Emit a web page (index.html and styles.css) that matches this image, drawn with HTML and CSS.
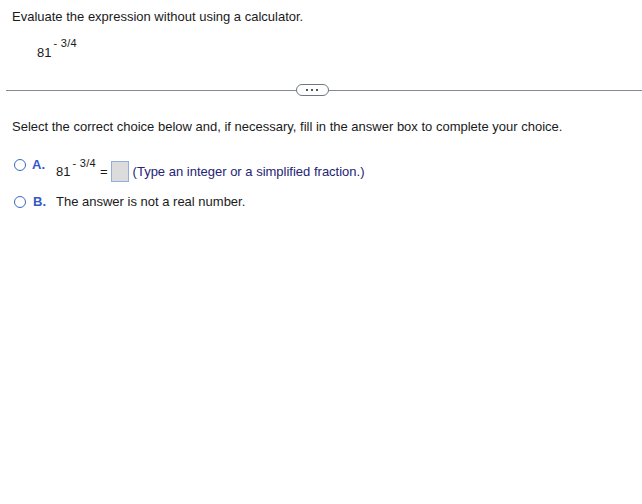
FILE: index.html
```html
<!DOCTYPE html>
<html>
<head>
<meta charset="utf-8">
<link rel="stylesheet" href="styles.css">
</head>
<body>
<div class="page">
  <p class="instr">Evaluate the expression without using a calculator.</p>
  <div class="expr"><span class="base">81</span><span class="sup">- 3/4</span></div>
  <div class="divider"><span class="pill"><span class="dot"></span><span class="dot"></span><span class="dot"></span></span></div>
  <p class="select">Select the correct choice below and, if necessary, fill in the answer box to complete your choice.</p>
  <div class="choice choice-a">
    <span class="radio"></span>
    <span class="label">A.</span>
    <span class="math"><span class="base">81</span><span class="sup">- 3/4</span></span>
    <span class="eq">=</span>
    <span class="box"></span>
    <span class="hint">(Type an integer or a simplified fraction.)</span>
  </div>
  <div class="choice choice-b">
    <span class="radio"></span>
    <span class="label">B.</span>
    <span class="text">The answer is not a real number.</span>
  </div>
</div>
</body>
</html>
```
FILE: styles.css
```css
html, body {
  margin: 0;
  padding: 0;
  background: #ffffff;
}
body {
  font-family: "Liberation Sans", Arial, sans-serif;
  font-size: 13px;
  color: #1a1a1a;
  width: 642px;
  height: 504px;
  overflow: hidden;
}
.page {
  padding: 9px 0 0 0;
}
p { margin: 0; }
.instr {
  padding-left: 12px;
  line-height: 16px;
}
.expr {
  display: flex;
  align-items: flex-start;
  padding-left: 37px;
  margin-top: 12px;
  height: 24px;
}
.base {
  display: inline-block;
  padding-top: 8px;
  line-height: 15px;
}
.sup {
  display: inline-block;
  font-size: 11px;
  line-height: 12px;
  margin-left: 2px;
  letter-spacing: 0.3px;
}
.divider {
  margin: 23px 0 0 6px;
  padding-right: 24px;
  height: 12px;
  display: flex;
  align-items: center;
  justify-content: center;
  position: relative;
}
.divider::before {
  content: "";
  position: absolute;
  left: 0;
  right: 0;
  top: 6px;
  height: 1px;
  background: #848b96;
}
.pill {
  position: relative;
  z-index: 1;
  width: 31px;
  height: 10px;
  border: 1px solid #6f7785;
  border-radius: 6px;
  background: #fff;
  display: flex;
  align-items: center;
  justify-content: center;
  gap: 3px;
}
.dot {
  width: 2px;
  height: 2px;
  background: #4d5560;
}
.select {
  padding-left: 12px;
  margin-top: 23px;
  line-height: 16px;
}
.choice {
  display: flex;
  align-items: flex-start;
  padding-left: 14px;
}
.choice-a {
  margin-top: 22px;
  height: 28px;
}
.choice-b {
  margin-top: 9px;
}
.radio {
  width: 10px;
  height: 10px;
  border: 1.3px solid #3d68c9;
  border-radius: 50%;
  margin-top: 2px;
  flex: none;
  box-sizing: content-box;
}
.label {
  color: #3558c3;
  font-weight: bold;
  margin-left: 6px;
  line-height: 15px;
  width: 24px;
}
.choice-b .label {
  margin-left: 7px;
  width: 23px;
}
.math {
  display: flex;
  align-items: flex-start;
}
.math .base {
  padding-top: 7px;
}
.eq {
  margin-left: 4px;
  padding-top: 7px;
  line-height: 15px;
}
.box {
  width: 16px;
  height: 19px;
  border: 1px solid #93ade0;
  background: #dcdcdc;
  margin-left: 3px;
  margin-top: 4px;
}
.hint {
  color: #242474;
  margin-left: 4px;
  padding-top: 7px;
  line-height: 15px;
}
.text {
  line-height: 15px;
}
```
